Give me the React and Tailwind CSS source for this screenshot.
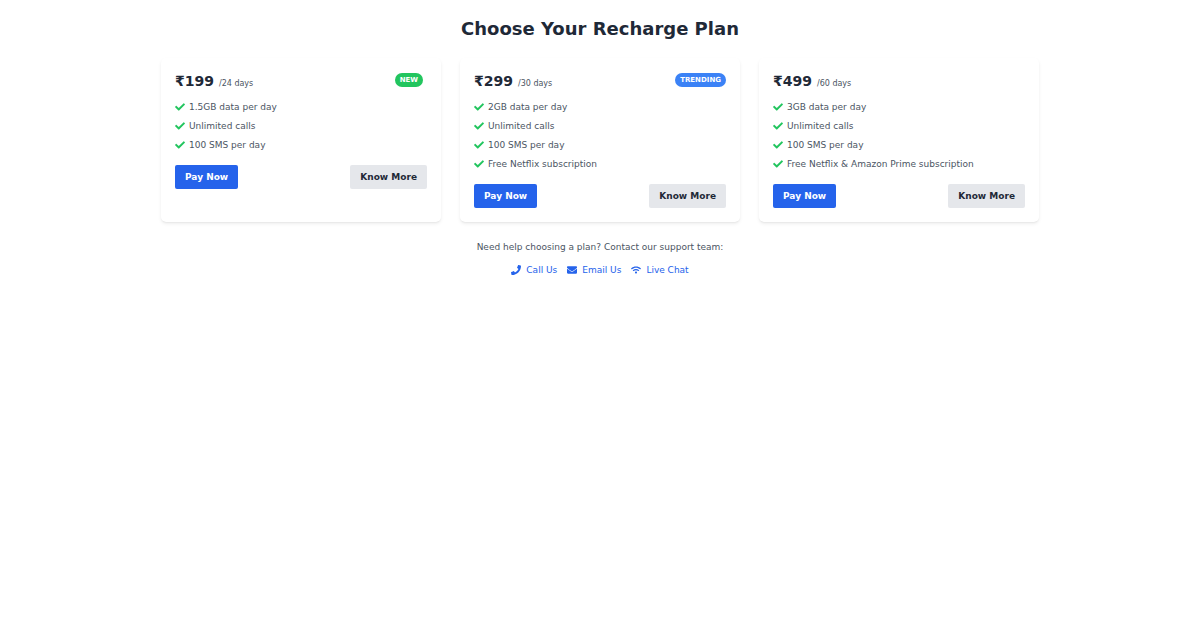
import { FaCheck, FaEnvelope, FaPhone, FaWifi } from "react-icons/fa";

const plans = [
  {
    price: "₹199",
    validity: "/24 days",
    features: ["1.5GB data per day", "Unlimited calls", "100 SMS per day"],
    badge: { label: "NEW", style: "bg-[#22c55e] mr-1" },
  },
  {
    price: "₹299",
    validity: "/30 days",
    features: ["2GB data per day", "Unlimited calls", "100 SMS per day", "Free Netflix subscription"],
    badge: { label: "TRENDING", style: "bg-[#3b82f6]" },
  },
  {
    price: "₹499",
    validity: "/60 days",
    features: [
      "3GB data per day",
      "Unlimited calls",
      "100 SMS per day",
      "Free Netflix & Amazon Prime subscription",
    ],
  },
];

const contacts = [
  { label: "Call Us", href: "#call", Icon: FaPhone },
  { label: "Email Us", href: "#email", Icon: FaEnvelope },
  { label: "Live Chat", href: "#chat", Icon: FaWifi },
];

function PlanCard({ plan }) {
  return (
    <article className="rounded-[5px] bg-white p-[14px] shadow-[0_2px_4px_-1px_rgba(0,0,0,0.1),0_1px_2px_-1px_rgba(0,0,0,0.1)]">
      <header className="mb-[9px] flex h-[19px] items-start justify-between">
        <h2 className="flex items-baseline gap-[5px] text-[14px] leading-[19px] font-bold text-[#1f2937]">
          {plan.price}
          <span className="text-[8px] font-normal text-[#4b5563]">{plan.validity}</span>
        </h2>
        {plan.badge && (
          <span
            className={`mt-px rounded-full px-[5px] text-[7px] leading-[14px] font-bold text-white ${plan.badge.style}`}
          >
            {plan.badge.label}
          </span>
        )}
      </header>
      <ul className="mb-[13px] flex flex-col gap-[5px]">
        {plan.features.map((feature) => (
          <li key={feature} className="flex items-center gap-1 leading-[14px] text-[#4b5563]">
            <FaCheck className="size-[10px] text-[#22c55e]" />
            {feature}
          </li>
        ))}
      </ul>
      <div className="flex justify-between">
        <button type="button" className="h-6 rounded-xs bg-[#2563eb] px-[10px] font-bold text-white">
          Pay Now
        </button>
        <button type="button" className="h-6 rounded-xs bg-[#e5e7eb] px-[10px] font-bold text-[#1f2937]">
          Know More
        </button>
      </div>
    </article>
  );
}

export default function App() {
  return (
    <main className="mx-auto max-w-[896px] px-[9px] py-[18px] font-['DejaVu_Sans',sans-serif] text-[9px] leading-[14px]">
      <h1 className="mb-[18px] text-center text-[18px] leading-[22px] font-bold text-[#1f2937]">
        Choose Your Recharge Plan
      </h1>
      <section className="grid grid-cols-1 gap-[19px] sm:grid-cols-3">
        {plans.map((plan) => (
          <PlanCard key={plan.price} plan={plan} />
        ))}
      </section>
      <footer className="mt-[18px] text-center text-[#4b5563]">
        <p>Need help choosing a plan? Contact our support team:</p>
        <nav className="mt-[9px] flex justify-center gap-[10px]">
          {contacts.map(({ label, href, Icon }) => (
            <a key={label} href={href} className="flex items-center gap-[5px] text-[#2563eb]">
              <Icon className="size-[10px]" />
              {label}
            </a>
          ))}
        </nav>
      </footer>
    </main>
  );
}
